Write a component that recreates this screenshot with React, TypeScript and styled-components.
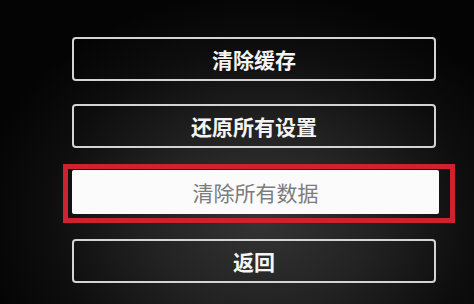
import React from 'react'
import styled, { createGlobalStyle } from 'styled-components'

const GlobalStyle = createGlobalStyle`
  html, body {
    margin: 0;
    padding: 0;
    width: 474px;
    height: 304px;
    overflow: hidden;
    background: #050505;
  }
`

const Screen = styled.div`
  width: 474px;
  height: 304px;
  box-sizing: border-box;
  padding: 37px 0 0 72px;
  background: radial-gradient(ellipse 60% 75% at 55% 72%, #343434 0%, #222 40%, #0d0d0d 75%, #040404 100%);
  font-family: 'Noto Sans CJK SC', 'Noto Sans', sans-serif;
`

const Menu = styled.div`
  display: flex;
  flex-direction: column;
  align-items: flex-start;
`

const MenuButton = styled.div<{ $gap: number }>`
  width: 364px;
  height: 44px;
  box-sizing: border-box;
  border: 2px solid #d4d4d4;
  border-radius: 4px;
  display: flex;
  align-items: center;
  justify-content: center;
  color: #f4f4f4;
  font-size: 21px;
  font-weight: 700;
  margin-bottom: ${(p) => p.$gap}px;
`

const FocusFrame = styled.div`
  margin-left: -9px;
  margin-bottom: 16px;
  border: 5px solid #cf2130;
  padding: 1px 11px 4px 4px;
`

const FocusButton = styled.div`
  width: 367px;
  height: 44px;
  background: #fbfbfb;
  border-radius: 2px;
  display: flex;
  align-items: center;
  justify-content: center;
  color: #7c7c7c;
  font-size: 21px;
  font-weight: 400;
`

export default function App() {
  return (
    <>
      <GlobalStyle />
      <Screen>
        <Menu>
          <MenuButton $gap={23}>清除缓存</MenuButton>
          <MenuButton $gap={16}>还原所有设置</MenuButton>
          <FocusFrame>
            <FocusButton>清除所有数据</FocusButton>
          </FocusFrame>
          <MenuButton $gap={0}>返回</MenuButton>
        </Menu>
      </Screen>
    </>
  )
}
